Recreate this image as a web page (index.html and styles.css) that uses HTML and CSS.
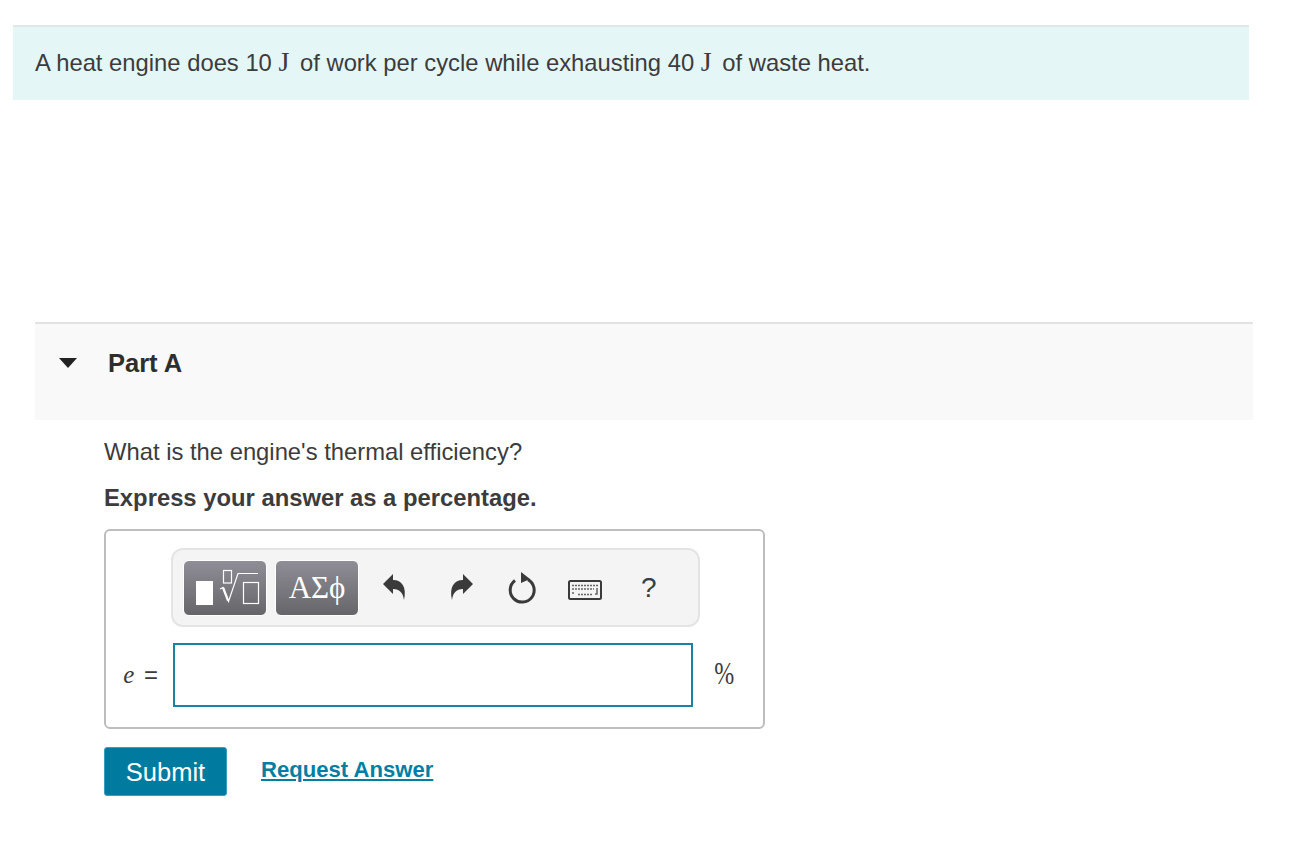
FILE: index.html
```html
<!DOCTYPE html>
<html lang="en">

<head>
    <meta charset="UTF-8">
    <title>Part A</title>
    <link rel="stylesheet" href="styles.css">
</head>

<body>
    <div class="intro">
        <p>A heat engine does 10 <span class="unit">J</span> of work per cycle while exhausting 40 <span class="unit">J</span> of waste heat.</p>
    </div>

    <div class="part">
        <div class="part-head">
            <span class="caret"></span>
            <h2>Part A</h2>
        </div>
        <div class="part-body">
            <p class="question">What is the engine's thermal efficiency?</p>
            <p class="instruction">Express your answer as a percentage.</p>

            <div class="answer-box">
                <div class="toolbar">
                    <button class="tool-btn" type="button" aria-label="Templates">
                        <svg class="tool-glyph" width="82" height="54" viewBox="0 0 82 54">
                            <rect x="12" y="20" width="17" height="24" fill="#fff"/>
                            <g fill="none" stroke="#fff" stroke-width="1.2">
                                <rect x="39.500" y="9.500" width="8" height="12.500"/>
                                <path d="M36 28l3-1.500 5.500 14L54 12.500h20"/>
                                <path d="M39 26.500l5 13" stroke-width="2.200"/>
                                <rect x="59.500" y="21.500" width="15" height="21"/>
                            </g>
                        </svg>
                    </button>
                    <button class="tool-btn tool-greek" type="button">ΑΣϕ</button>
                    <svg class="icon-undo" width="26" height="30" viewBox="0 0 26 30">
                        <path d="M1 11L11 1v6c9 0 14 7 11 20-1-7-4-11-11-11v5z" fill="#3a3a3a"/>
                    </svg>
                    <svg class="icon-redo" width="26" height="30" viewBox="0 0 26 30">
                        <path d="M25 11L15 1v6C6 7 1 14 4 27c1-7 4-11 11-11v5z" fill="#3a3a3a"/>
                    </svg>
                    <svg class="icon-reset" width="32" height="34" viewBox="0 0 32 34">
                        <path d="M22 8.600A12 12 0 1 1 9 9.500" fill="none" stroke="#3a3a3a" stroke-width="3"/>
                        <path d="M15 1l9 7-9 4z" fill="#3a3a3a"/>
                    </svg>
                    <svg class="icon-keys" width="34" height="20" viewBox="0 0 34 20">
                        <rect x="1" y="1" width="32" height="18" rx="1.500" fill="#f4f4f4" stroke="#3a3a3a" stroke-width="2"/>
                        <path d="M4 5.500h26M4 9h22M4 13h3M10 14.500h15" fill="none" stroke="#666" stroke-width="1.500" stroke-dasharray="2 1"/>
                        <path d="M29 8v6h-2" fill="none" stroke="#666" stroke-width="1.500"/>
                    </svg>
                    <span class="tool-help">?</span>
                </div>

                <div class="answer-row">
                    <span class="answer-label"><i>e</i> =</span>
                    <input class="answer-input" type="text" aria-label="e">
                    <span class="answer-unit">%</span>
                </div>
            </div>

            <div class="actions">
                <button class="submit" type="button">Submit</button>
                <a class="request" href="#">Request Answer</a>
            </div>
        </div>
    </div>
</body>

</html>
```

FILE: styles.css
```css
body {
    margin: 0;
    padding-top: 25px;
    background: #fff;
    color: #3c3c3c;
    font-family: "Liberation Sans", Arial, sans-serif;
    font-size: 23.8px;
}

p {
    margin: 0;
}

.intro {
    width: 1236px;
    height: 75px;
    margin-left: 13px;
    box-sizing: border-box;
    padding: 20px 22px 0;
    border-top: 2px solid #e2e6e6;
    background: #e5f6f6;
    line-height: 30px;
}

.unit {
    margin-right: 4px;
    font-family: "Liberation Serif", serif;
    font-size: 28px;
}

.part {
    width: 1218px;
    margin: 222px 0 0 35px;
}

.part-head {
    display: flex;
    align-items: center;
    height: 96px;
    border-top: 2px solid #e2e2e2;
    background: #f9f9f9;
}

.caret {
    width: 0;
    height: 0;
    margin: -18px 0 0 24px;
    border-left: 9px solid transparent;
    border-right: 9px solid transparent;
    border-top: 10px solid #222;
}

.part-head h2 {
    margin: -18px 0 0 31px;
    color: #2e2e2e;
    font-size: 25.500px;
}

.part-body {
    padding: 17px 0 0 69px;
}

.question {
    line-height: 30px;
}

.instruction {
    margin-top: 16px;
    font-weight: bold;
    line-height: 30px;
}

.answer-box {
    width: 661px;
    height: 200px;
    box-sizing: border-box;
    margin-top: 16px;
    padding-top: 17px;
    border: 2px solid #bdbdbd;
    border-radius: 6px;
}

.toolbar {
    display: flex;
    align-items: center;
    width: 529px;
    height: 79px;
    box-sizing: border-box;
    margin-left: 65px;
    padding-left: 10px;
    border: 2px solid #e4e4e4;
    border-radius: 12px;
    background: #f4f4f4;
}

.tool-btn {
    width: 84px;
    height: 56px;
    padding: 0;
    border: 1px solid #fff;
    border-radius: 6px;
    background: linear-gradient(#8f8d96, #66666a);
    color: #fff;
}

.tool-glyph {
    display: block;
}

.tool-greek {
    margin-left: 8px;
    font-family: "Liberation Serif", serif;
    font-size: 31px;
}

.icon-undo {
    margin-left: 23px;
}

.icon-redo {
    margin-left: 40px;
}

.icon-reset {
    margin-left: 32px;
}

.icon-keys {
    margin: 5px 0 0 30px;
}

.tool-help {
    margin-left: 39px;
    font-size: 28px;
}

.answer-row {
    display: flex;
    align-items: center;
    margin-top: 16px;
}

.answer-label {
    width: 67px;
    box-sizing: border-box;
    padding-right: 15px;
    font-size: 24px;
    text-align: right;
    white-space: nowrap;
    word-spacing: 3px;
}

.answer-label i {
    font-family: "Liberation Serif", serif;
    font-size: 25px;
}

.answer-input {
    width: 520px;
    height: 64px;
    box-sizing: border-box;
    border: 2px solid #1b82a6;
    background: #fff;
}

.answer-unit {
    display: inline-block;
    margin: -3px 0 0 18px;
    font-family: "Liberation Serif", serif;
    font-size: 32px;
    transform: scaleX(0.75);
}

.actions {
    display: flex;
    align-items: center;
    margin-top: 18px;
}

.submit {
    width: 123px;
    height: 49px;
    padding: 2px 0 0;
    border: 1px solid #3b9dbd;
    border-radius: 3px;
    background: #007ba0;
    color: #fff;
    font-family: inherit;
    font-size: 25.500px;
}

.request {
    margin: -4px 0 0 34px;
    color: #007fa3;
    font-size: 22.100px;
    font-weight: bold;
}
```
